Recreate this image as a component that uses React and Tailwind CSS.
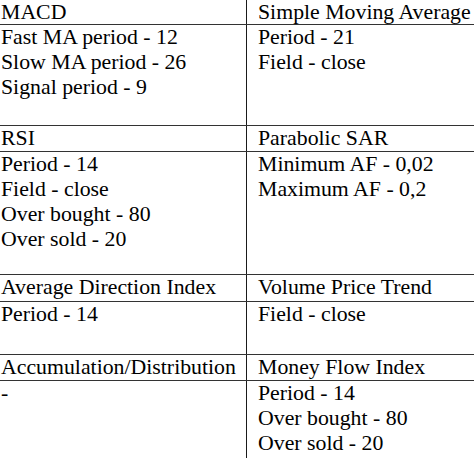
import React from 'react';

const sections = [
  {
    headH: 'h-[25px]',
    bodyH: 'h-[101px]',
    left: { title: 'MACD', items: ['Fast MA period - 12', 'Slow MA period - 26', 'Signal period - 9'] },
    right: { title: 'Simple Moving Average', items: ['Period - 21', 'Field - close'] },
  },
  {
    headH: 'h-[26px]',
    bodyH: 'h-[123px]',
    left: { title: 'RSI', items: ['Period - 14', 'Field - close', 'Over bought - 80', 'Over sold - 20'] },
    right: { title: 'Parabolic SAR', items: ['Minimum AF - 0,02', 'Maximum AF - 0,2'] },
  },
  {
    headH: 'h-[27px]',
    bodyH: 'h-[53px]',
    left: { title: 'Average Direction Index', items: ['Period - 14'] },
    right: { title: 'Volume Price Trend', items: ['Field - close'] },
  },
  {
    headH: 'h-[26px]',
    bodyH: 'h-[77px]',
    left: { title: 'Accumulation/Distribution', items: ['-'] },
    right: { title: 'Money Flow Index', items: ['Period - 14', 'Over bought - 80', 'Over sold - 20'] },
  },
];

const serif = "font-['Liberation_Serif','Times_New_Roman',serif]";

function Line({ children }) {
  return <div className={`${serif} text-[21.8px] leading-[25px] text-black`}>{children}</div>;
}

function Cell({ lines, side }) {
  const pad = side === 'left' ? 'pl-[1px] border-r border-r-[#1a1a1a]' : 'pl-[11px]';
  return (
    <div className={`${pad} overflow-hidden whitespace-nowrap`}>
      {lines.map((t) => (
        <Line key={t}>{t}</Line>
      ))}
    </div>
  );
}

export default function App() {
  return (
    <div className="w-[474px] h-[458px] overflow-hidden bg-white">
      {sections.map((s, i) => {
        const last = i === sections.length - 1;
        return (
          <div key={i}>
            <div className={`grid grid-cols-[247px_1fr] ${s.headH} border-b-[1.5px] border-b-[#333]`}>
              <Cell side="left" lines={[s.left.title]} />
              <Cell side="right" lines={[s.right.title]} />
            </div>
            <div className={`grid grid-cols-[247px_1fr] ${s.bodyH} ${last ? '' : 'border-b-[1.5px] border-b-[#333]'}`}>
              <Cell side="left" lines={s.left.items} />
              <Cell side="right" lines={s.right.items} />
            </div>
          </div>
        );
      })}
    </div>
  );
}
